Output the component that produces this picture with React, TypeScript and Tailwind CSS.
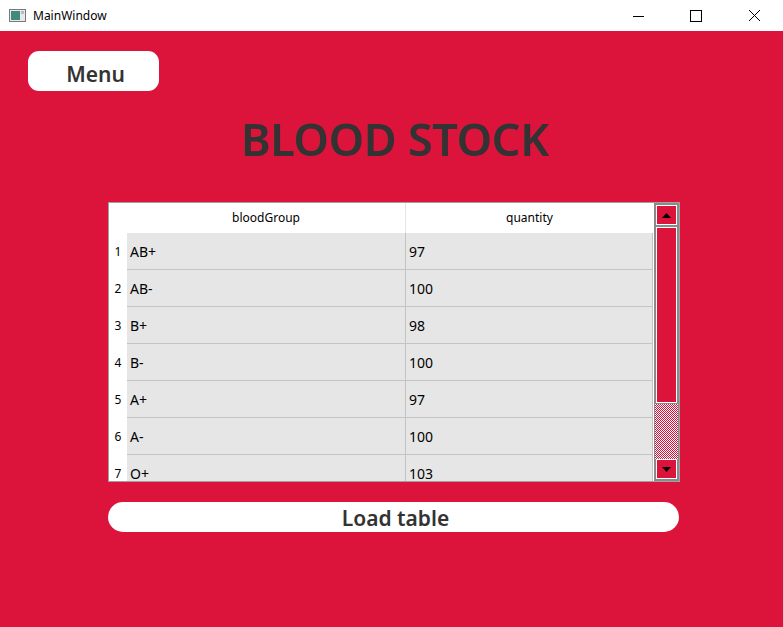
const rows: [string, number][] = [
  ['AB+', 97],
  ['AB-', 100],
  ['B+', 98],
  ['B-', 100],
  ['A+', 97],
  ['A-', 100],
  ['O+', 103],
];

function TitleBar() {
  return (
    <div className="h-[31px] bg-white flex items-center text-[12px] text-black">
      <div className="w-[32px] flex justify-center pl-[2px]">
        <svg width="17" height="13" viewBox="0 0 17 13">
          <rect x="0.5" y="0.5" width="16" height="12" fill="#e8e8e8" stroke="#7a7a7a" />
          <rect x="2" y="2" width="9" height="9" fill="#3f8a7c" />
          <rect x="12" y="2" width="3" height="3" fill="#bbb" />
        </svg>
      </div>
      <span className="ml-[1px]">MainWindow</span>
      <div className="ml-auto flex h-full">
        <div className="w-[58px] flex items-center justify-center">
          <svg width="12" height="12" viewBox="0 0 12 12">
            <path d="M1 6.5h11" stroke="#000" strokeWidth="1" />
          </svg>
        </div>
        <div className="w-[58px] flex items-center justify-center">
          <svg width="12" height="12" viewBox="0 0 12 12">
            <rect x="0.5" y="0.5" width="11" height="11" fill="none" stroke="#000" />
          </svg>
        </div>
        <div className="w-[58px] flex items-center justify-center">
          <svg width="13" height="13" viewBox="0 0 13 13">
            <path d="M1 1l11 11M12 1L1 12" stroke="#000" strokeWidth="1" />
          </svg>
        </div>
      </div>
    </div>
  );
}

function ScrollBar() {
  return (
    <div className="w-[25px] h-full border border-[#8a8a8a] bg-[#8a8a8a] flex flex-col">
      <div className="h-[20px] mx-[1px] mt-[1px] bg-[#dc143c] border border-white flex items-center justify-center">
        <svg width="9" height="5" viewBox="0 0 9 5"><path d="M4.5 0L9 5H0z" fill="#000" /></svg>
      </div>
      <div className="flex-1 flex flex-col mt-[2px]">
        <div className="h-[176px] mx-[1px] bg-[#dc143c] border border-white"></div>
        <div className="flex-1 mt-[1px] bg-[repeating-conic-gradient(#dc143c_0_25%,#fff_0_50%)] bg-[length:2px_2px]"></div>
      </div>
      <div className="h-[20px] mx-[1px] mb-[1px] bg-[#dc143c] border border-white flex items-center justify-center">
        <svg width="9" height="5" viewBox="0 0 9 5"><path d="M0 0H9L4.5 5z" fill="#000" /></svg>
      </div>
    </div>
  );
}

export default function App() {
  return (
    <div className="w-[783px] h-[627px] flex flex-col font-['Noto_Sans','Open_Sans',sans-serif] overflow-hidden">
      <TitleBar />
      <div className="flex-1 bg-[#dc143c] flex flex-col px-[28px] pt-[20px]">
        <button className="w-[131px] h-[40px] bg-white rounded-[11px] text-[21px] font-semibold text-[#333] leading-none flex items-center justify-center pt-[7px] pl-[4px]">
          Menu
        </button>
        <h1 className="text-center text-[45px] font-semibold text-[#333] leading-none mt-[25px] tracking-[-0.3px] pl-[6px]">
          BLOOD STOCK
        </h1>
        <div className="ml-[80px] mt-[41px] w-[572px] h-[280px] border border-[#a0a0a0] bg-white flex">
          <div className="flex-1 flex flex-col overflow-hidden">
            <div className="h-[30px] flex text-[12px] text-black shrink-0">
              <div className="w-[18px]" />
              <div className="w-[279px] flex items-center justify-center border-r border-[#e6e6e6]">bloodGroup</div>
              <div className="w-[247px] flex items-center justify-center">quantity</div>
            </div>
            {rows.map(([g, q], i) => (
              <div key={g} className="h-[37px] flex shrink-0 text-[14px] text-black">
                <div className="w-[18px] bg-white flex items-center justify-center text-[12px]">{i + 1}</div>
                <div className="w-[279px] bg-[#e6e6e6] border-r border-b border-[#c4c4c4] flex items-center pl-[3px]">{g}</div>
                <div className="w-[247px] bg-[#e6e6e6] border-r border-b border-[#c4c4c4] flex items-center pl-[3px]">{q}</div>
              </div>
            ))}
          </div>
          <ScrollBar />
        </div>
        <button className="ml-[80px] mt-[20px] w-[571px] h-[30px] bg-white rounded-full text-[21px] font-semibold text-[#333] leading-none flex items-center justify-center pt-[2px] pl-[4px]">
          Load table
        </button>
      </div>
    </div>
  );
}
